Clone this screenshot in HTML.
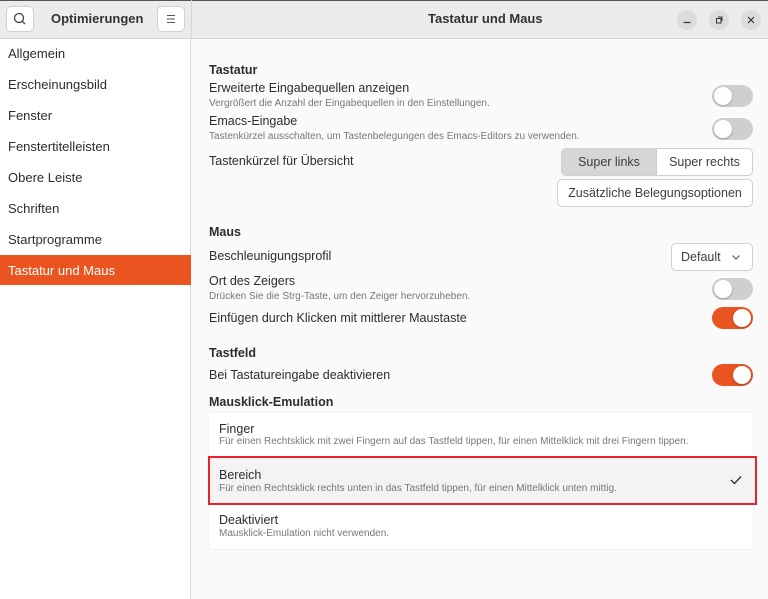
<!DOCTYPE html>
<html><head><meta charset="utf-8"><style>
*{margin:0;padding:0;box-sizing:border-box}
body{width:768px;height:599px;overflow:hidden;font-family:"Liberation Sans",sans-serif;color:#3d3d3d;background:#fafafa;position:relative;font-size:12.5px}
.a{position:absolute;white-space:nowrap}
.hb{left:0;top:0;width:768px;height:39px;background:#ebebeb;border-bottom:1px solid #d4d4d4;border-top:1px solid #555}
.side{left:0;top:39px;width:191px;height:560px;background:#fff;border-right:1px solid #d8d8d8}
.btn{background:#fff;border:1px solid #d0d0d0;border-radius:5px}
.wc{width:20px;height:20px;border-radius:50%;background:#dcdcdc}
.si{left:8px;font-size:13px;color:#2d2d2d}
.h{font-weight:bold;font-size:12.5px;color:#2d2d2d}
.t{font-size:12.5px;color:#2d2d2d}
.s{font-size:10px;color:#777}
.sw{width:41px;height:22px;border-radius:11px;background:#cfcfcf}
.sw::after{content:"";position:absolute;top:2px;left:2px;width:18px;height:18px;border-radius:50%;background:#fff;box-shadow:0 1px 2px rgba(0,0,0,.25)}
.sw.on{background:#e95420}.sw.on::after{left:21px}
</style></head><body>
<div class="a hb"></div>
<div class="a" style="left:191px;top:0;width:1px;height:39px;background:#d4d4d4"></div>
<div class="a btn" style="left:6px;top:6px;width:28px;height:26px"><svg width="28" height="26" style="position:absolute;left:-1px;top:-1px"><circle cx="13" cy="12" r="4.5" fill="none" stroke="#444" stroke-width="1.3"/><line x1="16.3" y1="15.3" x2="19" y2="18" stroke="#444" stroke-width="1.3"/></svg></div>
<div class="a" style="left:51px;top:11px;font-weight:bold;font-size:13px;color:#333">Optimierungen</div>
<div class="a btn" style="left:157px;top:6px;width:28px;height:26px"><svg width="28" height="26" style="position:absolute;left:-1px;top:-1px"><path d="M10 9.5h8M10 13h8M10 16.5h8" stroke="#555" stroke-width="1"/></svg></div>
<div class="a" style="left:428px;top:11px;font-weight:bold;font-size:13px;color:#333">Tastatur und Maus</div>
<div class="a wc" style="left:677px;top:10px"><svg width="20" height="20"><path d="M6.5 12.5h7" stroke="#333" stroke-width="1.2"/></svg></div>
<div class="a wc" style="left:709px;top:10px"><svg width="20" height="20"><rect x="7.5" y="8.5" width="4.5" height="4.5" fill="none" stroke="#333"/><path d="M9 7h4v4" fill="none" stroke="#333"/></svg></div>
<div class="a wc" style="left:741px;top:10px"><svg width="20" height="20"><path d="M7 7l6 6M13 7l-6 6" stroke="#333" stroke-width="1.2"/></svg></div>
<div class="a side"></div>
<div class="a si" style="top:46px">Allgemein</div>
<div class="a si" style="top:77px">Erscheinungsbild</div>
<div class="a si" style="top:108px">Fenster</div>
<div class="a si" style="top:139px">Fenstertitelleisten</div>
<div class="a si" style="top:170px">Obere Leiste</div>
<div class="a si" style="top:201px">Schriften</div>
<div class="a si" style="top:232px">Startprogramme</div>
<div class="a" style="left:0;top:255px;width:191px;height:30px;background:#e95420"></div>
<div class="a si" style="top:263px;color:#fff">Tastatur und Maus</div>

<div class="a h" style="left:209px;top:63px">Tastatur</div>
<div class="a t" style="left:209px;top:81px">Erweiterte Eingabequellen anzeigen</div>
<div class="a s" style="left:209px;top:98px">Vergrößert die Anzahl der Eingabequellen in den Einstellungen.</div>
<div class="a sw" style="left:712px;top:85px"></div>
<div class="a t" style="left:209px;top:114px">Emacs-Eingabe</div>
<div class="a s" style="left:209px;top:131px">Tastenkürzel ausschalten, um Tastenbelegungen des Emacs-Editors zu verwenden.</div>
<div class="a sw" style="left:712px;top:118px"></div>
<div class="a t" style="left:209px;top:154px">Tastenkürzel für Übersicht</div>
<div class="a" style="left:561px;top:148px;width:192px;height:28px;border:1px solid #d0d0d0;border-radius:5px;background:#fff;overflow:hidden">
<div class="a" style="left:0;top:0;width:95px;height:26px;background:#d6d6d6;border-right:1px solid #ccc;text-align:center;line-height:26px">Super links</div>
<div class="a" style="left:95px;top:0;width:95px;height:26px;text-align:center;line-height:26px">Super rechts</div></div>
<div class="a btn" style="left:557px;top:179px;width:196px;height:28px;text-align:center;line-height:26px">Zusätzliche Belegungsoptionen</div>

<div class="a h" style="left:209px;top:225px">Maus</div>
<div class="a t" style="left:209px;top:249px">Beschleunigungsprofil</div>
<div class="a btn" style="left:671px;top:243px;width:82px;height:28px;line-height:26px;padding-left:9px">Default<svg style="position:absolute;left:59px;top:9px" width="10" height="8"><path d="M1.5 2.5l3.5 3.5 3.5-3.5" fill="none" stroke="#555" stroke-width="1.1"/></svg></div>
<div class="a t" style="left:209px;top:274px">Ort des Zeigers</div>
<div class="a s" style="left:209px;top:291px">Drücken Sie die Strg-Taste, um den Zeiger hervorzuheben.</div>
<div class="a sw" style="left:712px;top:278px"></div>
<div class="a t" style="left:209px;top:311px">Einfügen durch Klicken mit mittlerer Maustaste</div>
<div class="a sw on" style="left:712px;top:307px"></div>

<div class="a h" style="left:209px;top:346px">Tastfeld</div>
<div class="a t" style="left:209px;top:368px">Bei Tastatureingabe deaktivieren</div>
<div class="a sw on" style="left:712px;top:364px"></div>
<div class="a h" style="left:209px;top:395px">Mausklick-Emulation</div>

<div class="a" style="left:209px;top:413px;width:544px;height:136px;background:#fff;box-shadow:0 0 1px rgba(0,0,0,.15)"></div>
<div class="a t" style="left:219px;top:422px">Finger</div>
<div class="a s" style="left:219px;top:436px">Für einen Rechtsklick mit zwei Fingern auf das Tastfeld tippen, für einen Mittelklick mit drei Fingern tippen.</div>
<div class="a" style="left:208px;top:456px;width:549px;height:49px;background:#f3f3f3;border:2px solid #e8232a"></div>
<div class="a t" style="left:219px;top:468px">Bereich</div>
<div class="a s" style="left:219px;top:483px">Für einen Rechtsklick rechts unten in das Tastfeld tippen, für einen Mittelklick unten mittig.</div>
<svg class="a" style="left:729px;top:474px" width="14" height="12"><path d="M2 6 L5.5 9.5 L12 2.5" fill="none" stroke="#333" stroke-width="1.4"/></svg>
<div class="a t" style="left:219px;top:513px">Deaktiviert</div>
<div class="a s" style="left:219px;top:528px">Mausklick-Emulation nicht verwenden.</div>
</body></html>
